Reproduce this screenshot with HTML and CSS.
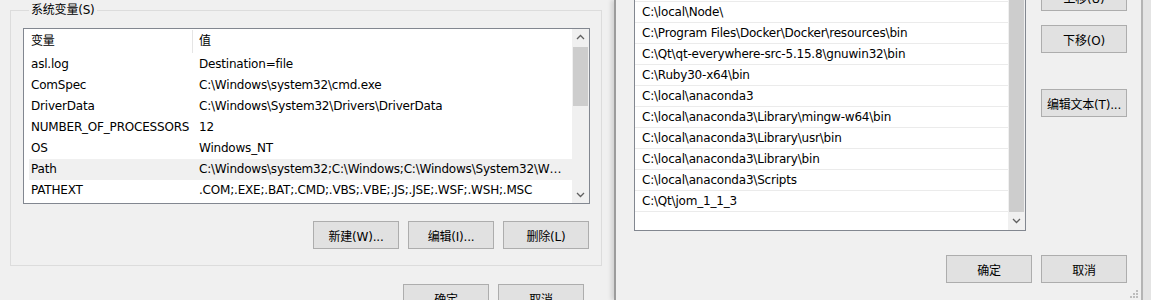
FILE: index.html
```html
<!DOCTYPE html>
<html lang="zh-CN">
<head>
    <meta charset="UTF-8">
    <title>环境变量</title>
    <link rel="stylesheet" href="styles.css">
</head>
<body>
    <div class="screen">
        <div class="dialog env-dialog">
            <fieldset class="group">
                <legend>系统变量(S)</legend>
                <div class="listview">
                    <div class="lv-body">
                        <div class="lv-header">
                            <div class="lv-hcol name">变量</div>
                            <div class="lv-hcol value">值</div>
                        </div>
                        <div class="lv-row"><span class="c1">asl.log</span><span class="c2">Destination=file</span></div>
                        <div class="lv-row"><span class="c1">ComSpec</span><span class="c2">C:\Windows\system32\cmd.exe</span></div>
                        <div class="lv-row"><span class="c1">DriverData</span><span class="c2">C:\Windows\System32\Drivers\DriverData</span></div>
                        <div class="lv-row"><span class="c1">NUMBER_OF_PROCESSORS</span><span class="c2">12</span></div>
                        <div class="lv-row"><span class="c1">OS</span><span class="c2">Windows_NT</span></div>
                        <div class="lv-row selected"><span class="c1">Path</span><span class="c2">C:\Windows\system32;C:\Windows;C:\Windows\System32\Wbem;C:\Windows\System32\WindowsPowerShell\v1.0\</span></div>
                        <div class="lv-row"><span class="c1">PATHEXT</span><span class="c2">.COM;.EXE;.BAT;.CMD;.VBS;.VBE;.JS;.JSE;.WSF;.WSH;.MSC</span></div>
                    </div>
                    <div class="scrollbar">
                        <div class="sb-arrow">
                            <svg width="17" height="17" viewBox="0 0 17 17"><path d="M5 10 L8.5 6.5 L12 10" fill="none" stroke="#606060" stroke-width="1.3"/></svg>
                        </div>
                        <div class="sb-thumb short"></div>
                        <div class="sb-track"></div>
                        <div class="sb-arrow">
                            <svg width="17" height="17" viewBox="0 0 17 17"><path d="M5 7 L8.5 10.5 L12 7" fill="none" stroke="#606060" stroke-width="1.3"/></svg>
                        </div>
                    </div>
                </div>
                <div class="btn-row group-btns">
                    <button class="btn">新建(W)...</button>
                    <button class="btn">编辑(I)...</button>
                    <button class="btn">删除(L)</button>
                </div>
            </fieldset>
            <div class="btn-row env-foot">
                <button class="btn">确定</button>
                <button class="btn">取消</button>
            </div>
        </div>

        <div class="dialog path-dialog">
            <div class="path-main">
                <div class="path-list">
                    <div class="path-rows">
                        <div class="path-row">C:\local\Node\</div>
                        <div class="path-row">C:\Program Files\Docker\Docker\resources\bin</div>
                        <div class="path-row">C:\Qt\qt-everywhere-src-5.15.8\gnuwin32\bin</div>
                        <div class="path-row">C:\Ruby30-x64\bin</div>
                        <div class="path-row">C:\local\anaconda3</div>
                        <div class="path-row">C:\local\anaconda3\Library\mingw-w64\bin</div>
                        <div class="path-row">C:\local\anaconda3\Library\usr\bin</div>
                        <div class="path-row">C:\local\anaconda3\Library\bin</div>
                        <div class="path-row">C:\local\anaconda3\Scripts</div>
                        <div class="path-row">C:\Qt\jom_1_1_3</div>
                    </div>
                    <div class="scrollbar">
                        <div class="sb-thumb long"></div>
                        <div class="sb-arrow">
                            <svg width="17" height="17" viewBox="0 0 17 17"><path d="M5 7 L8.5 10.5 L12 7" fill="none" stroke="#606060" stroke-width="1.3"/></svg>
                        </div>
                    </div>
                </div>
                <div class="side-btns">
                    <button class="btn">上移(U)</button>
                    <button class="btn down">下移(O)</button>
                    <button class="btn edit-text">编辑文本(T)...</button>
                </div>
            </div>
            <div class="btn-row path-foot">
                <button class="btn">确定</button>
                <button class="btn">取消</button>
            </div>
            <svg class="grip" width="12" height="12" viewBox="0 0 12 12">
                <rect x="8" y="2" width="2" height="2" fill="#bdbdbd"/>
                <rect x="5" y="5" width="2" height="2" fill="#bdbdbd"/>
                <rect x="8" y="5" width="2" height="2" fill="#bdbdbd"/>
                <rect x="2" y="8" width="2" height="2" fill="#bdbdbd"/>
                <rect x="5" y="8" width="2" height="2" fill="#bdbdbd"/>
                <rect x="8" y="8" width="2" height="2" fill="#bdbdbd"/>
            </svg>
        </div>
        <div class="backdrop"></div>
    </div>
</body>
</html>
```

FILE: styles.css
```css
html, body { margin: 0; padding: 0; }
body { background: #f0f0f0; font-family: "DejaVu Sans", "Noto Sans CJK SC", sans-serif; font-size: 12px; letter-spacing: -0.2px; color: #000; }

.screen { display: flex; width: 1151px; height: 300px; overflow: hidden; }
.dialog { background: #f0f0f0; height: 300px; box-sizing: border-box; }

/* left: environment variables */
.env-dialog { width: 614px; flex: none; display: flex; flex-direction: column; }
.group { margin: 2px 0 0 10px; width: 592px; box-sizing: border-box; padding: 10px 11px 16px 12px; border: 1px solid #dcdcdc; min-width: 0; }
.group legend { margin-left: 6px; padding: 0 2px; line-height: 16px; height: 16px; }

.listview { display: flex; height: 176px; box-sizing: border-box; border: 1px solid #828790; background: #fff; }
.lv-body { flex: 1; min-width: 0; }
.lv-header { display: flex; align-items: center; height: 25px; }
.lv-hcol { line-height: 25px; }
.lv-hcol.name { width: 161px; padding-left: 7px; height: 23px; line-height: 23px; border-right: 1px solid #e5e5e5; }
.lv-hcol.value { padding-left: 6px; }
.lv-row { display: flex; height: 21px; line-height: 21px; margin-left: 5px; white-space: nowrap; }
.lv-row.selected { background: #f0f0f0; }
.lv-row .c1 { width: 162px; flex: none; padding-left: 2px; }
.lv-row .c2 { flex: 1; min-width: 0; padding-left: 6px; padding-right: 6px; overflow: hidden; text-overflow: ellipsis; }

.scrollbar { width: 17px; flex: none; display: flex; flex-direction: column; background: #f0f0f0; }
.sb-arrow { height: 17px; flex: none; }
.sb-arrow svg { display: block; }
.sb-thumb { background: #cdcdcd; margin: 1px 1px 0 1px; flex: none; }
.sb-thumb.short { height: 59px; }
.sb-thumb.long { height: 212px; margin-top: 0; }
.sb-track { flex: 1; }

.btn-row { display: flex; justify-content: flex-end; gap: 9px; }
.group-btns { margin-top: 17px; padding-right: 1px; }
.env-foot { margin-top: 18px; padding-right: 30px; }

.btn { width: 86px; height: 28px; box-sizing: border-box; border: 1px solid #adadad; background: #e1e1e1; font: inherit; letter-spacing: inherit; color: #000; padding: 0; flex: none; white-space: nowrap; }

/* right: edit Path */
.path-dialog { width: 529px; flex: none; position: relative; border-left: 2px solid #9c9c9c; border-right: 2px solid #b4b4b4; box-shadow: -3px 0 4px rgba(0, 0, 0, 0.12); padding: 0 14px 0 18px; }
.path-main { display: flex; gap: 15px; }
.path-list { width: 392px; height: 231px; box-sizing: border-box; display: flex; background: #fff; border: 1px solid #828790; border-top: none; }
.path-rows { flex: 1; min-width: 0; padding-top: 1px; }
.path-row { height: 20px; line-height: 20px; padding-left: 7px; border-bottom: 1px solid #ebebeb; white-space: nowrap; overflow: hidden; }
.path-row:first-child { border-top: 1px solid #ebebeb; }
.path-list .scrollbar { height: 230px; }

.side-btns { display: flex; flex-direction: column; margin-top: -17px; }
.side-btns .down { margin-top: 14px; }
.side-btns .edit-text { margin-top: 36px; }
.path-foot { margin-top: 24px; }

.grip { position: absolute; right: 1px; bottom: 0; }

.backdrop { flex: 1; background: #e4e4e4; }
```
